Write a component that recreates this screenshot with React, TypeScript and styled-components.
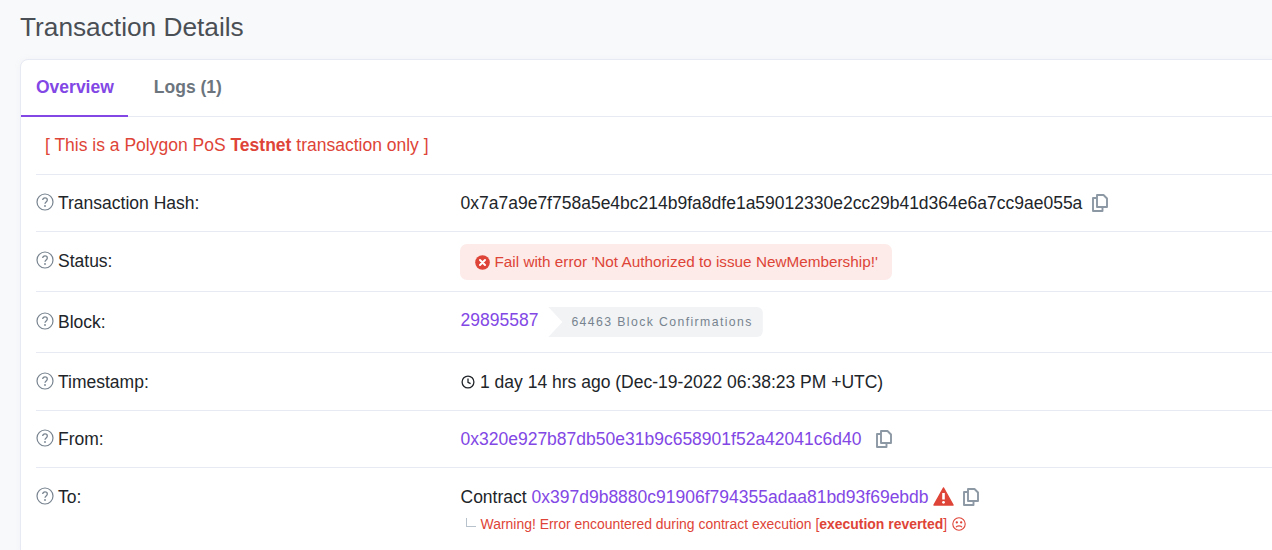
import styled, { createGlobalStyle } from "styled-components";

const GlobalStyle = createGlobalStyle`
  html, body {
    margin: 0;
    padding: 0;
    height: 550px;
    overflow: hidden;
    background: #f8f9fb;
    font-family: "Liberation Sans", Arial, sans-serif;
  }
`;

const HelpSvg = styled.svg`
  margin-top: -2px;
`;

const HelpIcon = () => (
  <HelpSvg width="18" height="18" viewBox="0 0 18 18" fill="none">
    <circle cx="9" cy="9" r="8" stroke="#77838f" strokeWidth="1.2" />
    <path d="M6.7 7.1c0-1.3 1-2.2 2.3-2.2s2.3.9 2.300 2.100c0 1.900-2.300 1.900-2.300 3.700" stroke="#77838f" strokeWidth="1.3" />
    <circle cx="9" cy="13" r=".9" fill="#77838f" />
  </HelpSvg>
);

const CopyIcon = () => (
  <svg width="16" height="18" viewBox="0 0 16 18" fill="none" stroke="#8c98a4" strokeWidth="1.9">
    <path d="M5 1h6.500L15 4.500V13H5z" strokeLinejoin="round" />
    <path d="M5 4H1v13h9.500v-4" strokeLinejoin="round" />
  </svg>
);

const ClockIcon = () => (
  <svg width="14" height="14" viewBox="0 0 14 14" fill="none" stroke="#212529" strokeWidth="1.3">
    <circle cx="7" cy="7" r="5.900" />
    <path d="M7 3.500V7.300L9.600 8.600" />
  </svg>
);

const FailIcon = () => (
  <svg width="15" height="15" viewBox="0 0 15 15">
    <circle cx="7.500" cy="7.500" r="7.300" fill="#de4437" />
    <path d="M5 5l5 5M10 5l-5 5" stroke="#fff" strokeWidth="2" strokeLinecap="round" />
  </svg>
);

const WarnSvg = styled.svg`
  margin-top: -2px;
`;

const WarnIcon = () => (
  <WarnSvg width="21" height="19" viewBox="0 0 21 19">
    <path d="M10.500 1L20 18H1z" fill="#de4437" stroke="#de4437" strokeWidth="1.500" strokeLinejoin="round" />
    <path d="M10.500 6v6.500" stroke="#fff" strokeWidth="2.600" />
    <circle cx="10.500" cy="15.300" r="1.400" fill="#fff" />
  </WarnSvg>
);

const FrownIcon = () => (
  <svg width="14" height="14" viewBox="0 0 14 14" fill="none" stroke="#de4437" strokeWidth="1.100">
    <circle cx="7" cy="7" r="6.200" />
    <path d="M4 10.200c.8-1.800 5.200-1.800 6 0" />
    <circle cx="4.800" cy="5.400" r=".6" fill="#de4437" />
    <circle cx="9.200" cy="5.400" r=".6" fill="#de4437" />
  </svg>
);

const Page = styled.div`
  height: 550px;
  overflow: hidden;
  padding-left: 20px;
`;

const Title = styled.h1`
  margin: 0;
  height: 59px;
  padding-top: 12px;
  box-sizing: border-box;
  font-size: 26.250px;
  line-height: 30px;
  font-weight: 400;
  color: #4a4f55;
`;

const Card = styled.div`
  width: 1400px;
  background: #fff;
  border: 1px solid #e7eaf3;
  border-radius: 8px;
  box-shadow: 0 0 6px rgba(151, 164, 175, 0.08);
`;

const Tabs = styled.div`
  display: flex;
  height: 56px;
  border-bottom: 1px solid #e7eaf3;
`;

const Tab = styled.div<{ $active?: boolean }>`
  display: flex;
  align-items: center;
  padding: 0 14px 0 15px;
  margin-right: ${(p) => (p.$active ? "11px" : "0")};
  font-size: 17.500px;
  font-weight: 700;
  color: ${(p) => (p.$active ? "#8247e5" : "#6c757e")};
  border-bottom: 2px solid ${(p) => (p.$active ? "#8247e5" : "transparent")};
  margin-bottom: -1px;
`;

const Body = styled.div`
  padding: 0 15px;
`;

const Notice = styled.div`
  height: 58px;
  padding: 17px 9px 0;
  box-sizing: border-box;
  font-size: 17.500px;
  line-height: 22px;
  color: #de4437;
  border-bottom: 1px solid #e7eaf3;
`;

const Row = styled.div<{ $height: number; $last?: boolean }>`
  display: flex;
  height: ${(p) => p.$height}px;
  box-sizing: border-box;
  border-bottom: ${(p) => (p.$last ? "none" : "1px solid #e7eaf3")};
  font-size: 17.500px;
  color: #212529;
`;

const Label = styled.div<{ $top: number }>`
  flex: 0 0 424.500px;
  display: flex;
  align-items: center;
  gap: 4px;
  height: 22px;
  margin-top: ${(p) => p.$top}px;
`;

const Value = styled.div<{ $top: number }>`
  margin-top: ${(p) => p.$top}px;
`;

const Line = styled.div`
  display: flex;
  align-items: center;
  height: 22px;
`;

const Link = styled.span`
  color: #8247e5;
`;

const IconSlot = styled.span<{ $gap: number }>`
  display: inline-flex;
  margin-left: ${(p) => p.$gap}px;
`;

const StatusPill = styled.div`
  display: inline-flex;
  align-items: center;
  gap: 5px;
  height: 36px;
  margin-left: -0.5px;
  padding: 0 14px 0 14.500px;
  border-radius: 7px;
  background: #fcebe9;
  color: #de4437;
  font-size: 15.300px;
`;

const BlockLine = styled.div`
  display: flex;
  align-items: flex-start;
`;

const BlockLink = styled(Link)`
  line-height: 22px;
  margin-top: 2px;
`;

const Confirmations = styled.span`
  display: inline-flex;
  align-items: center;
  height: 30px;
  margin-left: 10px;
  padding: 0 10px 0 23px;
  background: #f1f3f5;
  border-radius: 0 6px 6px 0;
  clip-path: polygon(0 0, 100% 0, 100% 100%, 0 100%, 14px 50%);
  font-size: 12.250px;
  font-weight: 400;
  letter-spacing: 1.400px;
  color: #77838f;
`;

const TimeText = styled.span`
  margin-left: 5.500px;
`;

const Warning = styled.div`
  display: flex;
  align-items: center;
  height: 18px;
  margin-top: 7px;
  font-size: 13.950px;
  color: #de4437;
`;

const Elbow = styled.span`
  display: inline-block;
  width: 9px;
  height: 8px;
  margin: -4px 5px 0 5px;
  border-left: 1px solid #b8c2cc;
  border-bottom: 1px solid #b8c2cc;
`;

export default function App() {
  return (
    <Page>
      <GlobalStyle />
      <Title>Transaction Details</Title>
      <Card>
        <Tabs>
          <Tab $active>Overview</Tab>
          <Tab>Logs (1)</Tab>
        </Tabs>
        <Body>
          <Notice>
            [ This is a Polygon PoS <b>Testnet</b> transaction only ]
          </Notice>
          <Row $height={57}>
            <Label $top={17}>
              <HelpIcon />
              Transaction Hash:
            </Label>
            <Value $top={17}>
              <Line>
                0x7a7a9e7f758a5e4bc214b9fa8dfe1a59012330e2cc29b41d364e6a7cc9ae055a
                <IconSlot $gap={10}>
                  <CopyIcon />
                </IconSlot>
              </Line>
            </Value>
          </Row>
          <Row $height={60}>
            <Label $top={18}>
              <HelpIcon />
              Status:
            </Label>
            <Value $top={12}>
              <StatusPill>
                <FailIcon />
                Fail with error 'Not Authorized to issue NewMembership!'
              </StatusPill>
            </Value>
          </Row>
          <Row $height={61}>
            <Label $top={19}>
              <HelpIcon />
              Block:
            </Label>
            <Value $top={15}>
              <BlockLine>
                <BlockLink>29895587</BlockLink>
                <Confirmations>64463 Block Confirmations</Confirmations>
              </BlockLine>
            </Value>
          </Row>
          <Row $height={58}>
            <Label $top={18}>
              <HelpIcon />
              Timestamp:
            </Label>
            <Value $top={18}>
              <Line>
                <ClockIcon />
                <TimeText>1 day 14 hrs ago (Dec-19-2022 06:38:23 PM +UTC)</TimeText>
              </Line>
            </Value>
          </Row>
          <Row $height={57}>
            <Label $top={17}>
              <HelpIcon />
              From:
            </Label>
            <Value $top={17}>
              <Line>
                <Link>0x320e927b87db50e31b9c658901f52a42041c6d40</Link>
                <IconSlot $gap={15}>
                  <CopyIcon />
                </IconSlot>
              </Line>
            </Value>
          </Row>
          <Row $height={90} $last>
            <Label $top={18}>
              <HelpIcon />
              To:
            </Label>
            <Value $top={18}>
              <Line>
                Contract&nbsp;<Link>0x397d9b8880c91906f794355adaa81bd93f69ebdb</Link>
                <IconSlot $gap={4}>
                  <WarnIcon />
                </IconSlot>
                <IconSlot $gap={9}>
                  <CopyIcon />
                </IconSlot>
              </Line>
              <Warning>
                <Elbow />
                Warning! Error encountered during contract execution [<b>execution reverted</b>]
                <IconSlot $gap={5}>
                  <FrownIcon />
                </IconSlot>
              </Warning>
            </Value>
          </Row>
        </Body>
      </Card>
    </Page>
  );
}
